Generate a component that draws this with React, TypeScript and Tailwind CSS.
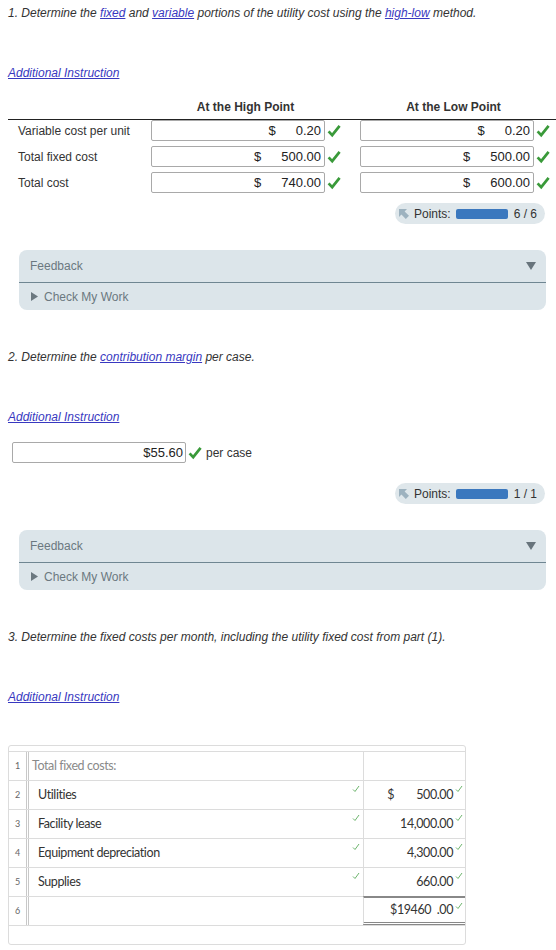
import React from "react";

const Check = ({ className = "" }: { className?: string }) => (
  <svg viewBox="0 0 14 14" className={className}>
    <path d="M1.6 7.4 L5.2 11.2 L12.6 1.8" fill="none" stroke="currentColor" strokeWidth="2.7" strokeLinejoin="miter" />
  </svg>
);

const TinyCheck = ({ className = "" }: { className?: string }) => (
  <svg viewBox="0 0 8 8" className={className}>
    <path d="M1 4.5 L3 6.5 L7 1" fill="none" stroke="currentColor" strokeWidth="1" />
  </svg>
);

const Link = ({ children }: { children: React.ReactNode }) => (
  <a className="text-[#3838c0] underline">{children}</a>
);

const Points = ({ score }: { score: string }) => (
  <div className="flex justify-end pr-[11px]">
    <div className="flex h-[21px] w-[150px] items-center rounded-full bg-[#dfe7eb] pl-[3px] text-[12px] text-[#333]">
      <svg viewBox="0 0 12 12" className="h-[12px] w-[12px]">
        <path d="M1 1 H9 L6.6 3.4 L11 7.8 L7.8 11 L3.4 6.6 L1 9 Z" fill="#9db2bf" />
      </svg>
      <span className="ml-[4px]">Points:</span>
      <div className="ml-[5px] h-[10px] w-[52px] rounded-[2px] bg-[#3b78be]" />
      <span className="ml-[6px]">{score}</span>
    </div>
  </div>
);

const Feedback = () => (
  <div className="ml-[11px] w-[527px] rounded-lg bg-[#dce5ea] text-[12px] text-[#6b7880]">
    <div className="flex h-[33px] items-center justify-between border-b border-[#6f8692] pl-[11px] pr-[10px]">
      <span>Feedback</span>
      <svg viewBox="0 0 10 8" className="h-[8px] w-[10px]">
        <path d="M0 0 H10 L5 8 Z" fill="#68747c" />
      </svg>
    </div>
    <div className="flex h-[27px] items-center pl-[12px]">
      <svg viewBox="0 0 7 9" className="h-[9px] w-[7px]">
        <path d="M0 0 L7 4.5 L0 9 Z" fill="#6b7880" />
      </svg>
      <span className="ml-[6px]">Check My Work</span>
    </div>
  </div>
);

const rows = [
  { label: "Variable cost per unit", high: "0.20", low: "0.20" },
  { label: "Total fixed cost", high: "500.00", low: "500.00" },
  { label: "Total cost", high: "740.00", low: "600.00" },
];

const Money = ({ value }: { value: string }) => (
  <div className="flex items-center">
    <div className="flex h-[21px] w-[174px] items-center justify-end gap-[20px] rounded-[2px] border border-[#a9a9a9] bg-white pr-[3px] text-[13px] text-[#222]">
      <span>$</span>
      <span>{value}</span>
    </div>
    <Check className="ml-[2px] h-[14px] w-[14px] text-[#3a9a3a]" />
  </div>
);

const sheet = [
  { n: 1, label: "Total fixed costs:", value: "", head: true },
  { n: 2, label: "Utilities", value: "500.00", dollar: true },
  { n: 3, label: "Facility lease", value: "14,000.00" },
  { n: 4, label: "Equipment depreciation", value: "4,300.00" },
  { n: 5, label: "Supplies", value: "660.00" },
  { n: 6, label: "", value: "$19460  .00", total: true },
];

export default function App() {
  return (
    <div className="min-h-[950px] w-[556px] bg-white pl-2 font-['Liberation_Sans',Arial,sans-serif] text-[12px] leading-[14px] text-[#333]">
      <p className="pt-[6px] italic">
        1. Determine the <Link>fixed</Link> and <Link>variable</Link> portions of the utility cost using the{" "}
        <Link>high-low</Link> method.
      </p>
      <p className="mt-[46px] italic">
        <Link>Additional Instruction</Link>
      </p>

      <div className="mt-[20px] flex border-b border-[#222] pb-[5px] font-bold">
        <div className="w-[143px]" />
        <div className="w-[189px] text-center">At the High Point</div>
        <div className="ml-[19px] w-[189px] text-center">At the Low Point</div>
      </div>
      <div className="flex flex-col gap-[5px]">
        {rows.map((r) => (
          <div key={r.label} className="flex items-center">
            <div className="w-[143px] pl-[10px]">{r.label}</div>
            <Money value={r.high} />
            <div className="ml-[19px]">
              <Money value={r.low} />
            </div>
          </div>
        ))}
      </div>
      <div className="mt-[10px]">
        <Points score="6 / 6" />
      </div>
      <div className="mt-[26px]">
        <Feedback />
      </div>

      <p className="mt-[40px] italic">
        2. Determine the <Link>contribution margin</Link> per case.
      </p>
      <p className="mt-[46px] italic">
        <Link>Additional Instruction</Link>
      </p>
      <div className="ml-[4px] mt-[18px] flex items-center">
        <div className="flex h-[21px] w-[174px] items-center justify-end rounded-[2px] border border-[#a9a9a9] bg-white pr-[2px] text-[13px] text-[#222]">
          $55.60
        </div>
        <Check className="ml-[2px] h-[14px] w-[14px] text-[#3a9a3a]" />
        <span className="ml-[4px]">per case</span>
      </div>
      <div className="mt-[20px]">
        <Points score="1 / 1" />
      </div>
      <div className="mt-[26px]">
        <Feedback />
      </div>

      <p className="mt-[40px] italic">3. Determine the fixed costs per month, including the utility fixed cost from part (1).</p>
      <p className="mt-[46px] italic">
        <Link>Additional Instruction</Link>
      </p>

      <div className="mt-[41px] h-[200px] w-[458px] rounded-[3px] border border-[#dcdcdc] pt-[5px] font-['Lato',sans-serif] text-[12.5px] tracking-[-0.4px] text-[#333]">
        <div className="border-t border-[#dcdcdc]">
          {sheet.map((s) => (
            <div key={s.n} className="flex h-[29px] border-b border-[#dcdcdc]">
              <div className="flex w-[20px] items-center justify-center border-r-[3px] border-double border-[#c8c8c8] text-[9px] tracking-normal text-[#666]">
                {s.n}
              </div>
              <div
                className={`relative flex w-[334px] items-center ${s.head ? "pl-[3px] text-[#8a8a8a]" : "pl-[9px]"}`}
              >
                {s.label}
                {!s.head && !s.total && (
                  <TinyCheck className="absolute right-[3px] top-[4px] h-[8px] w-[8px] text-[#6db56d]" />
                )}
              </div>
              <div
                className={`relative flex flex-1 items-center justify-end border-l border-[#dcdcdc] pr-[12px] ${
                  s.total ? "-mt-[1px] border-t-2 border-b-[3px] border-double border-t-[#888] border-b-[#888]" : ""
                }`}
              >
                {s.dollar && <span className="mr-[22px]">$</span>}
                <span className="whitespace-pre">{s.value}</span>
                {!s.head && (
                  <TinyCheck className="absolute right-[2px] top-[4px] h-[8px] w-[8px] text-[#6db56d]" />
                )}
              </div>
            </div>
          ))}
        </div>
      </div>
    </div>
  );
}
